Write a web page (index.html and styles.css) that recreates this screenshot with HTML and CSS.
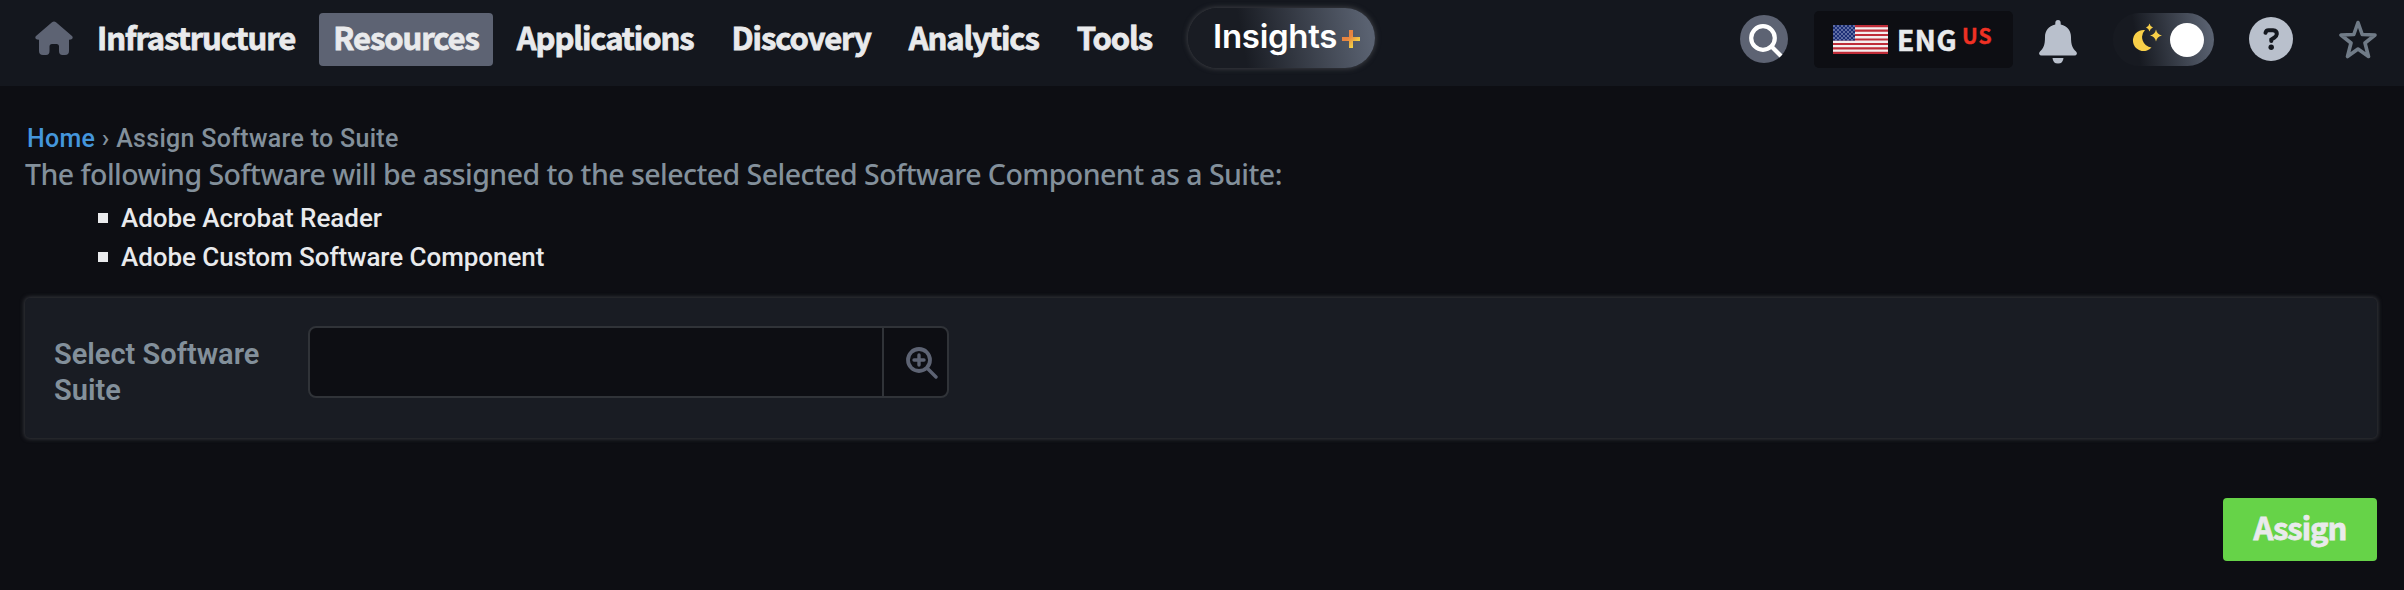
FILE: index.html
```
<!DOCTYPE html>
<html lang="en">

<head>
    <meta charset="UTF-8" />
    <title>Assign Software to Suite</title>
    <link rel="stylesheet" href="styles.css">
</head>

<body>

    <header class="topbar">
        <a class="home" href="#">
            <svg width="38" height="34" viewBox="0 0 38 34">
                <path d="M17 1.2 Q19 -.4 21 1.2 L37 15 Q38.4 16.6 37 18 Q36.2 18.8 34 18.8 V30 Q34 34 30 34 H27.500 Q24 34 24 30 V25.500 Q24 23 21.500 23 H17 Q14.500 23 14.500 25.500 V30 Q14.500 34 11 34 H8 Q4 34 4 30 V18.800 Q1.800 18.800 1 18 Q-.4 16.600 1 15 Z" fill="#5d6373" />
            </svg>
        </a>
        <nav class="menu">
            <a href="#">Infrastructure</a>
            <a href="#" class="active">Resources</a>
            <a href="#">Applications</a>
            <a href="#">Discovery</a>
            <a href="#">Analytics</a>
            <a href="#">Tools</a>
        </nav>
        <a class="insights" href="#">
            <span>Insights</span>
            <svg width="18" height="18" viewBox="0 0 18 18">
                <defs>
                    <linearGradient id="plus" x1="0" y1="0" x2="1" y2="1">
                        <stop offset=".4" stop-color="#e88440" />
                        <stop offset=".75" stop-color="#f3cf45" />
                    </linearGradient>
                </defs>
                <path d="M7 0h4v7h7v4h-7v7H7v-7H0V7h7z" fill="url(#plus)" />
            </svg>
        </a>

        <div class="tools">
            <svg class="search" width="48" height="48" viewBox="0 0 48 48">
                <circle cx="24" cy="24" r="24" fill="#5d6373" />
                <circle cx="23" cy="23" r="11.800" fill="none" stroke="#fff" stroke-width="4.200" />
                <path d="M31.500 31.500 L41 41" stroke="#fff" stroke-width="4.200" />
            </svg>
            <div class="lang">
                <svg width="55" height="29" viewBox="0 0 55 29">
                    <defs>
                        <pattern id="stars" width="4" height="4" patternUnits="userSpaceOnUse">
                            <circle cx="1" cy="1" r=".75" fill="#c3cbe2" />
                            <circle cx="3" cy="3" r=".75" fill="#c3cbe2" />
                        </pattern>
                    </defs>
                    <rect width="55" height="29" fill="#f4eeef" />
                    <path d="M0 1.100h55M0 5.600h55M0 10h55M0 14.500h55M0 19h55M0 23.400h55M0 27.900h55" stroke="#bf2c38" stroke-width="2.230" />
                    <rect width="22" height="15.600" fill="#1c2f77" />
                    <rect width="22" height="15.600" fill="url(#stars)" />
                </svg>
                <span class="lang-code">ENG</span>
                <span class="lang-region">US</span>
            </div>
            <svg class="bell" width="38" height="44" viewBox="0 0 38 44">
                <path d="M16.300 3 Q16.300 0 19 0 Q21.700 0 21.700 3 V4.500 C28.500 6 32 11 32 17 C32 25 33.500 28 37 31.500 Q38.200 33 37.800 34 Q37.300 35.500 35.500 35.500 H2.500 Q.7 35.500 .2 34 Q-.2 33 1 31.500 C4.500 28 6 25 6 17 C6 11 9.500 6 16.300 4.500 Z M13.500 38 H24.500 Q24 43.500 19 43.500 Q14 43.500 13.500 38 Z" fill="#b9c0cc" />
            </svg>
            <div class="theme">
                <svg width="30" height="30" viewBox="0 0 30 30">
                    <path d="M13 7 A10.600 10.600 0 1 0 19.500 24.500 A10.400 10.400 0 0 1 13 7 Z" fill="#f8cf48" />
                    <path d="M17.500 .5 Q18.200 3.700 21 4.500 Q18.200 5.300 17.500 8.500 Q16.800 5.300 14 4.500 Q16.800 3.700 17.500 .5 Z M24 6.500 Q25 11.500 30 12.500 Q25 13.500 24 18.500 Q23 13.500 18 12.500 Q23 11.500 24 6.500 Z" fill="#f8cf48" />
                </svg>
                <span class="knob"></span>
            </div>
            <svg class="help" width="44" height="44" viewBox="0 0 44 44">
                <circle cx="22" cy="22" r="22" fill="#b9c0cc" />
                <path d="M16.500 15.800 Q17 13.200 19.500 13.200 H24 Q28 13.500 27.800 17 Q27.500 19.300 25.500 20.500 L22.300 22.500 V24" fill="none" stroke="#14171e" stroke-width="4" stroke-linecap="round" />
                <circle cx="22.200" cy="30.200" r="2.700" fill="#14171e" />
            </svg>
            <svg class="star" width="38" height="39" viewBox="0 0 38 39">
                <path d="M19 2.500 L23.200 14.500 L36 15 L26 23 L29.500 36.500 L19 29 L8.500 36.500 L12 23 L2 15 L14.800 14.500 Z" fill="none" stroke="#707b87" stroke-width="3.600" stroke-linejoin="round" />
            </svg>
        </div>
    </header>

    <main class="page">
        <div class="breadcrumb"><a href="#">Home</a> <span>›</span> Assign Software to Suite</div>
        <h1 class="intro">The following Software will be assigned to the selected Selected Software Component as a Suite:</h1>
        <ul class="software">
            <li>Adobe Acrobat Reader</li>
            <li>Adobe Custom Software Component</li>
        </ul>

        <section class="panel">
            <label class="panel-label" for="suite">Select Software Suite</label>
            <div class="picker">
                <input id="suite" type="text">
                <button class="picker-button">
                    <svg width="32" height="32" viewBox="0 0 32 32">
                        <circle cx="13" cy="13" r="11" fill="none" stroke="#5d6373" stroke-width="3.800" />
                        <path d="M13 8v10M8 13h10M21.500 21.500l8.500 8.500" stroke="#5d6373" stroke-width="3.400" stroke-linecap="round" />
                    </svg>
                </button>
            </div>
        </section>

        <div class="actions">
            <button class="assign">Assign</button>
        </div>
    </main>

</body>

</html>
```
FILE: styles.css
```
* {
    box-sizing: border-box;
}

body {
    margin: 0;
    min-height: 590px;
    background-color: #0d0e13;
    color: #e9eaec;
    font-family: Roboto, "Open Sans", sans-serif;
}

a {
    color: inherit;
    text-decoration: none;
}

svg {
    display: block;
    flex: none;
}

/* ---- top bar ---- */
.topbar {
    display: flex;
    align-items: flex-start;
    height: 86px;
    padding-left: 35px;
    padding-right: 27px;
    background-color: #14171e;
}

.home {
    margin-top: 21px;
}

.menu {
    display: flex;
    gap: 10px;
    margin-top: 13px;
    margin-left: 10px;
}

.menu a {
    height: 53px;
    padding: 0 14px;
    border-radius: 4px;
    font-family: "Noto Sans CJK SC", "Noto Sans", sans-serif;
    font-size: 31px;
    font-weight: 700;
    letter-spacing: -1.08px;
    line-height: 48px;
    -webkit-text-stroke: .8px #e9eaec;
}

.menu .active {
    background-color: #5d6373;
}

.insights {
    display: flex;
    width: 187px;
    height: 60px;
    margin-top: 8px;
    margin-left: 22px;
    padding-left: 25px;
    border-radius: 30px;
    background: linear-gradient(80deg, #191c23 30%, #5a6271 95%);
    box-shadow: 0 0 5px 1px #3b3d42;
    color: #fff;
    font-family: Inter, sans-serif;
    font-size: 33px;
    font-weight: 600;
    letter-spacing: -.3px;
    line-height: 56px;
}

.insights svg {
    margin-top: 22px;
    margin-left: 5px;
}

.tools {
    display: flex;
    margin-left: auto;
}

.search {
    margin-top: 15px;
}

.lang {
    display: flex;
    width: 199px;
    height: 57px;
    margin-top: 11px;
    margin-left: 26px;
    padding-left: 19px;
    border-radius: 5px;
    background-color: #0d0e13;
    font-family: "Noto Sans CJK SC", "Noto Sans", sans-serif;
    font-weight: 700;
}

.lang svg {
    margin-top: 14px;
}

.lang-code {
    margin-left: 9px;
    font-size: 28px;
    letter-spacing: .6px;
    line-height: 57px;
    -webkit-text-stroke: .6px #e9eaec;
}

.lang-region {
    margin-left: 5px;
    color: #ef3124;
    font-size: 21px;
    letter-spacing: 1px;
    line-height: 49px;
    -webkit-text-stroke: .4px #ef3124;
}

.bell {
    margin-top: 20px;
    margin-left: 26px;
}

.theme {
    display: flex;
    width: 101px;
    height: 53px;
    margin-top: 13px;
    margin-left: 36px;
    padding-left: 19px;
    border-radius: 27px;
    background: linear-gradient(80deg, #171a21 25%, #5a6271 95%);
}

.theme svg {
    margin-top: 10px;
}

.knob {
    width: 34px;
    height: 34px;
    margin-top: 10px;
    margin-left: 8px;
    border-radius: 50%;
    background-color: #fff;
}

.help {
    margin-top: 17px;
    margin-left: 35px;
}

.star {
    margin-top: 20px;
    margin-left: 46px;
}

/* ---- content ---- */
.page {
    padding: 36px 27px 0 25px;
}

.breadcrumb {
    height: 32px;
    padding-left: 2px;
    color: #83909b;
    font-size: 25px;
    font-weight: 500;
    letter-spacing: .3px;
    line-height: 34px;
}

.breadcrumb a {
    color: #4496dc;
}

.intro {
    height: 42px;
    margin: 0;
    color: #83909b;
    font-family: "Noto Sans", sans-serif;
    font-size: 28.5px;
    font-weight: 500;
    letter-spacing: -.55px;
    line-height: 40px;
    white-space: nowrap;
}

.software {
    margin: 2px 0 0;
    padding: 0 0 0 73px;
    list-style: none;
}

.software li {
    display: flex;
    align-items: center;
    height: 39px;
    font-size: 26px;
    font-weight: 500;
    letter-spacing: -.05px;
}

.software li::before {
    content: "";
    width: 10px;
    height: 10px;
    margin-right: 13px;
    background-color: #e9eaec;
}

.panel {
    display: flex;
    height: 140px;
    margin-top: 22px;
    padding: 28px 29px;
    border-radius: 5px;
    background-color: #191c23;
    box-shadow: 0 0 4px 1px #36383d;
}

.panel-label {
    width: 254px;
    padding-top: 10px;
    padding-right: 34px;
    color: #83909b;
    font-size: 29px;
    font-weight: 600;
    line-height: 36px;
}

.picker {
    display: flex;
    width: 641px;
    height: 72px;
    border: 2px solid #303338;
    border-radius: 8px;
    background-color: #0d0e13;
}

.picker input {
    width: 572px;
    padding: 0 12px;
    border: none;
    background: none;
    color: #e9eaec;
    font: inherit;
}

.picker-button {
    flex: 1;
    padding: 2px 0 0 22px;
    border: none;
    border-left: 2px solid #303338;
    background: none;
}

.actions {
    display: flex;
    justify-content: flex-end;
    margin-top: 60px;
}

.assign {
    width: 154px;
    height: 63px;
    padding: 0 0 6px;
    border: none;
    border-radius: 4px;
    background-color: #66d348;
    color: #e9eaec;
    font-family: "Noto Sans CJK SC", "Noto Sans", sans-serif;
    font-size: 31px;
    font-weight: 700;
    letter-spacing: -1px;
    -webkit-text-stroke: .8px #e9eaec;
}
```
